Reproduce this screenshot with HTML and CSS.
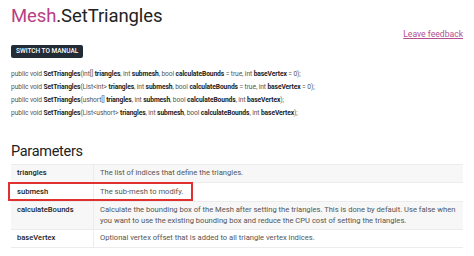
FILE: index.html
```html
<!DOCTYPE html>
<html>
<head>
<meta charset="utf-8">
<link rel="stylesheet" href="styles.css">
</head>
<body>
<div class="page">
  <h1 class="title"><span class="cls">Mesh</span>.SetTriangles</h1>
  <div class="bar">
    <button class="switch">SWITCH TO MANUAL</button>
    <a class="feedback" href="#">Leave feedback</a>
  </div>
  <div class="sigs">
    <div class="sig">public void <b>SetTriangles</b>(int[] <b>triangles</b>, int <b>submesh</b>, bool <b>calculateBounds</b> = true, int <b>baseVertex</b> = 0);</div>
    <div class="sig">public void <b>SetTriangles</b>(List&lt;int&gt; <b>triangles</b>, int <b>submesh</b>, bool <b>calculateBounds</b> = true, int <b>baseVertex</b> = 0);</div>
    <div class="sig">public void <b>SetTriangles</b>(ushort[] <b>triangles</b>, int <b>submesh</b>, bool <b>calculateBounds</b>, int <b>baseVertex</b>);</div>
    <div class="sig">public void <b>SetTriangles</b>(List&lt;ushort&gt; <b>triangles</b>, int <b>submesh</b>, bool <b>calculateBounds</b>, int <b>baseVertex</b>);</div>
  </div>
  <h2 class="params">Parameters</h2>
  <table class="ptable">
    <tr class="odd"><td class="name">triangles</td><td class="desc">The list of indices that define the triangles.</td></tr>
    <tr class="hl"><td class="name">submesh</td><td class="desc">The sub-mesh to modify.</td></tr>
    <tr class="odd"><td class="name">calculateBounds</td><td class="desc">Calculate the bounding box of the Mesh after setting the triangles. This is done by default. Use false when you want to use the existing bounding box and reduce the CPU cost of setting the triangles.</td></tr>
    <tr><td class="name">baseVertex</td><td class="desc">Optional vertex offset that is added to all triangle vertex indices.</td></tr>
  </table>
  <div class="highlight"></div>
</div>
</body>
</html>
```
FILE: styles.css
```css
html, body { margin: 0; padding: 0; background: #fff; }
body { font-family: Roboto, "Liberation Sans", sans-serif; color: #333; }
.page { position: relative; padding: 0 11px; width: 452px; }
.title { margin: 0; padding-top: 4px; font-size: 18.5px; font-weight: 400; line-height: 24px; color: #222; letter-spacing: -0.1px; }
.cls { color: #b93f84; }
.bar { display: flex; justify-content: space-between; align-items: flex-start; margin-top: 17px; }
.switch { margin: 0; border: 0; border-radius: 2px; background: #222c37; color: #fff; font-family: Roboto, "Liberation Sans", sans-serif; font-size: 6.5px; font-weight: 500; height: 13px; padding: 0 5px; line-height: 13px; }
.feedback { color: #b5508e; font-size: 8.6px; text-decoration: underline; margin-top: -16px; }
.sigs { margin-top: 10px; }
.sig { font-size: 6.7px; line-height: 13px; color: #555; white-space: nowrap; letter-spacing: -0.1px; }
.sig b { color: #222; font-weight: 700; }
.params { margin: 23px 0 0; font-size: 14.5px; font-weight: 400; color: #222; line-height: 18px; letter-spacing: -0.3px; }
.ptable { margin-top: 3px; width: 100%; border-collapse: collapse; font-size: 7.6px; }
.ptable td { border: 1px solid #ececec; border-left: 0; border-right: 0; padding: 3px 6px; vertical-align: top; line-height: 10.5px; }
.ptable td.name { width: 70px; color: #222; font-weight: 500; border-right: 1px solid #ececec; }
.ptable td.desc { color: #555; }
.ptable tr.odd td { background: #f7f7f7; }
.ptable tr.hl td { padding-top: 4px; padding-bottom: 4px; }
.highlight { position: absolute; left: 8px; top: 182px; width: 181px; height: 15px; border: 2px solid #e03030; }
```
